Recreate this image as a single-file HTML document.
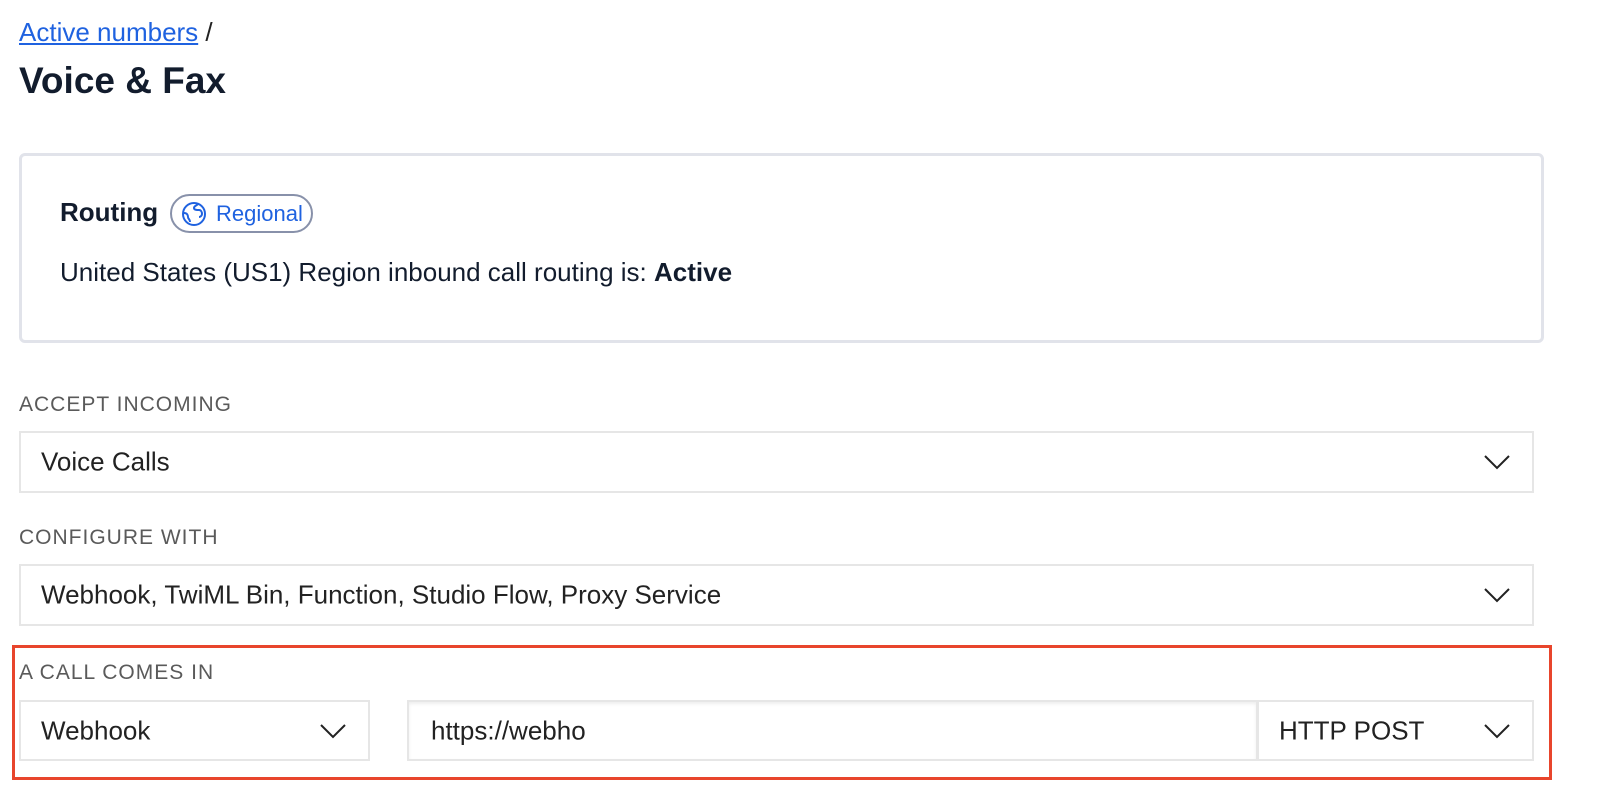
<!DOCTYPE html>
<html><head><style>
body{margin:0;width:1600px;height:809px;background:#fff;font-family:"Liberation Sans",sans-serif;position:relative;overflow:hidden}
.a{position:absolute}
.lbl{font-size:21px;color:#5a5a5a;letter-spacing:1px;left:19px}
.sel{position:absolute;border:2px solid #e6e6e6;box-sizing:border-box;background:#fff;font-size:26px;color:#222}
.sel span{position:absolute;left:20px;top:50%;transform:translateY(-50%)}
.chev{position:absolute;right:22px;top:50%;margin-top:-8px}
</style></head><body>
<div class="a" style="left:19px;top:17px;font-size:26px;color:#222"><span style="color:#1f62e0;text-decoration:underline">Active numbers</span> /</div>
<div class="a" style="left:19px;top:60px;font-size:37px;font-weight:bold;color:#121c2d">Voice &amp; Fax</div>
<div class="a" style="left:19px;top:153px;width:1525px;height:190px;border:3px solid #e1e3ea;border-radius:6px;box-sizing:border-box"></div>
<div class="a" style="left:60px;top:197px;font-size:26px;font-weight:bold;color:#121c2d">Routing</div>
<div class="a" style="left:170px;top:194px;width:143px;height:39px;border:2px solid #8891aa;border-radius:20px;box-sizing:border-box"></div>
<svg class="a" style="left:181px;top:201px" width="26" height="26" viewBox="0 0 26 26" fill="none" stroke="#1f62e0" stroke-width="2"><circle cx="13" cy="13" r="11"/><path d="M3 12c3 0 4 2 4 4s2 2 2 5M17 3c-2 2-4 2-4 4s3 2 5 2 3 2 3 4-2 3-3 3"/></svg>
<div class="a" style="left:216px;top:201px;font-size:22px;color:#1f62e0">Regional</div>
<div class="a" style="left:60px;top:257px;font-size:26px;color:#121c2d">United States (US1) Region inbound call routing is: <b>Active</b></div>
<div class="a lbl" style="top:393px">ACCEPT INCOMING</div>
<div class="sel" style="left:19px;top:431px;width:1515px;height:62px"><span>Voice Calls</span><svg class="chev" width="26" height="16"><path d="M1 2l12 12 12-12" fill="none" stroke="#222" stroke-width="2"/></svg></div>
<div class="a lbl" style="top:526px">CONFIGURE WITH</div>
<div class="sel" style="left:19px;top:564px;width:1515px;height:62px"><span>Webhook, TwiML Bin, Function, Studio Flow, Proxy Service</span><svg class="chev" width="26" height="16"><path d="M1 2l12 12 12-12" fill="none" stroke="#222" stroke-width="2"/></svg></div>
<div class="a" style="left:12px;top:645px;width:1540px;height:135px;border:3px solid #e8452c;box-sizing:border-box"></div>
<div class="a lbl" style="top:661px">A CALL COMES IN</div>
<div class="sel" style="left:19px;top:700px;width:351px;height:61px"><span>Webhook</span><svg class="chev" width="26" height="16"><path d="M1 2l12 12 12-12" fill="none" stroke="#222" stroke-width="2"/></svg></div>
<div class="sel" style="left:407px;top:700px;width:851px;height:61px;box-shadow:inset 0 2px 3px #eee"><span style="left:22px">https://webho</span></div>
<div class="sel" style="left:1257px;top:700px;width:277px;height:61px"><span>HTTP POST</span><svg class="chev" width="26" height="16"><path d="M1 2l12 12 12-12" fill="none" stroke="#222" stroke-width="2"/></svg></div>
</body></html>
